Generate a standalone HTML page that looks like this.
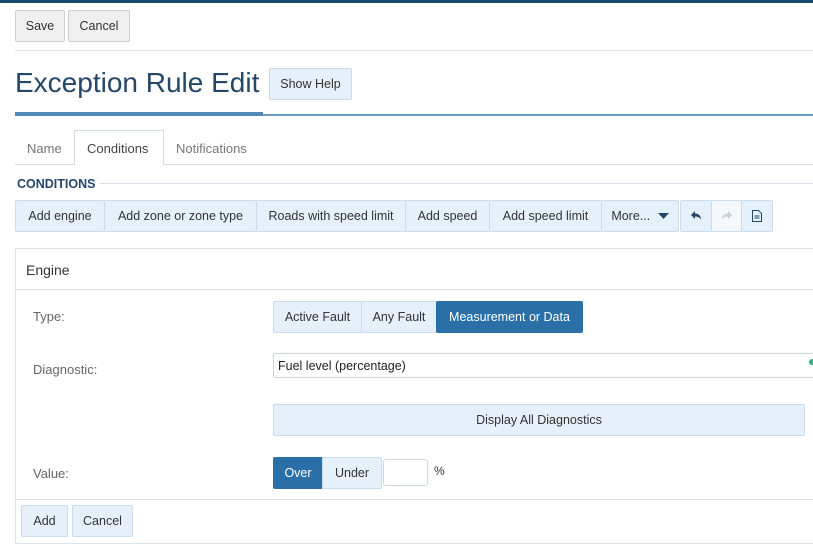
<!DOCTYPE html>
<html><head><meta charset="utf-8"><style>
*{box-sizing:border-box;margin:0;padding:0}
body{width:813px;height:544px;overflow:hidden;background:#fff;font-family:"Liberation Sans",sans-serif;font-size:13px;color:#333;position:relative}
.a{position:absolute}
.btn{position:absolute;display:flex;align-items:center;justify-content:center;border:1px solid #c9dced;background:#e6f0fb;color:#333;font-size:12.5px;border-radius:2px;white-space:nowrap}
.g{background:#efefef;border-color:#cfcfcf}
.p{background:#2a6fa8;border-color:#2a6fa8;color:#fff}
.lbl{position:absolute;color:#666;font-size:13px}
</style></head><body>
<div class="a" style="left:0;top:0;width:813px;height:3px;background:#17496e"></div>
<div class="btn g" style="left:15px;top:10px;width:50px;height:32px">Save</div>
<div class="btn g" style="left:68px;top:10px;width:62px;height:32px">Cancel</div>
<div class="a" style="left:15px;top:50px;width:798px;height:1px;background:#dde3ea"></div>
<div class="a" style="left:15px;top:67px;font-size:28px;color:#24476b">Exception Rule Edit</div>
<div class="btn" style="left:269px;top:68px;width:83px;height:32px">Show Help</div>
<div class="a" style="left:15px;top:112px;width:248px;height:4px;background:#4f8ab8"></div>
<div class="a" style="left:263px;top:114px;width:550px;height:2px;background:#6e9cc2"></div>
<div class="a" style="left:15px;top:164px;width:798px;height:1px;background:#cfdbe6"></div>
<div class="a" style="left:27px;top:141px;color:#777">Name</div>
<div class="a" style="left:74px;top:130px;width:90px;height:35px;border:1px solid #cfdbe6;border-bottom:none;background:#fff"></div>
<div class="a" style="left:87px;top:141px;color:#444">Conditions</div>
<div class="a" style="left:176px;top:141px;color:#777">Notifications</div>
<div class="a" style="left:17px;top:177px;font-weight:bold;font-size:12.5px;color:#24476b">CONDITIONS</div>
<div class="a" style="left:100px;top:183px;width:713px;height:1px;background:#d6e0ea"></div>
<div class="btn" style="left:15px;top:200px;width:90px;height:32px">Add engine</div>
<div class="btn" style="left:104px;top:200px;width:153px;height:32px">Add zone or zone type</div>
<div class="btn" style="left:256px;top:200px;width:150px;height:32px">Roads with speed limit</div>
<div class="btn" style="left:405px;top:200px;width:85px;height:32px">Add speed</div>
<div class="btn" style="left:489px;top:200px;width:113px;height:32px">Add speed limit</div>
<div class="btn" style="left:601px;top:200px;width:78px;height:32px">More...&nbsp;<svg width="11" height="7" style="margin-left:4px"><path d="M0 0H11L5.5 6Z" fill="#24476b"/></svg></div>
<div class="btn" style="left:680px;top:200px;width:32px;height:32px"><svg width="12" height="10"><path d="M1 4L5 0V2.5C9 2.5 11 5 11 9C10 6.5 8 5.5 5 5.5V8Z" fill="#24476b"/></svg></div>
<div class="btn" style="left:711px;top:200px;width:31px;height:32px;background:#f4f8fc"><svg width="12" height="10"><path d="M11 4L7 0V2.5C3 2.5 1 5 1 9C2 6.5 4 5.5 7 5.5V8Z" fill="#c5d3e0"/></svg></div>
<div class="btn" style="left:741px;top:200px;width:32px;height:32px"><svg width="10" height="12"><path d="M0.5 0.5H6.5L9.5 3.5V11.5H0.5Z" fill="none" stroke="#24476b"/><path d="M2.5 6H7.5M2.5 8H7.5" stroke="#24476b"/></svg></div>
<div class="a" style="left:15px;top:248px;width:800px;height:296px;border:1px solid #dde3ea"></div>
<div class="a" style="left:26px;top:262px;font-size:14px;color:#333">Engine</div>
<div class="a" style="left:16px;top:289px;width:797px;height:1px;background:#dde3ea"></div>
<div class="lbl" style="left:33px;top:309px">Type:</div>
<div class="btn" style="left:273px;top:301px;width:89px;height:32px">Active Fault</div>
<div class="btn" style="left:361px;top:301px;width:76px;height:32px">Any Fault</div>
<div class="btn p" style="left:436px;top:301px;width:147px;height:32px">Measurement or Data</div>
<div class="lbl" style="left:33px;top:362px">Diagnostic:</div>
<div class="a" style="left:273px;top:353px;width:545px;height:25px;border:1px solid #ccd6e0;border-radius:2px;padding:5px 4px;font-size:12.5px;color:#222">Fuel level (percentage)</div>
<div class="a" style="left:809px;top:359px;width:6px;height:6px;border-radius:3px;background:#2bb38a"></div>
<div class="btn" style="left:273px;top:404px;width:532px;height:32px">Display All Diagnostics</div>
<div class="lbl" style="left:33px;top:466px">Value:</div>
<div class="btn p" style="left:273px;top:457px;width:50px;height:32px">Over</div>
<div class="btn" style="left:322px;top:457px;width:60px;height:32px">Under</div>
<div class="a" style="left:383px;top:459px;width:45px;height:27px;border:1px solid #ccd6e0;border-radius:3px"></div>
<div class="a" style="left:434px;top:464px;font-size:12px">%</div>
<div class="a" style="left:16px;top:499px;width:797px;height:1px;background:#dde3ea"></div>
<div class="btn" style="left:21px;top:505px;width:47px;height:32px">Add</div>
<div class="btn" style="left:72px;top:505px;width:61px;height:32px">Cancel</div>
</body></html>
